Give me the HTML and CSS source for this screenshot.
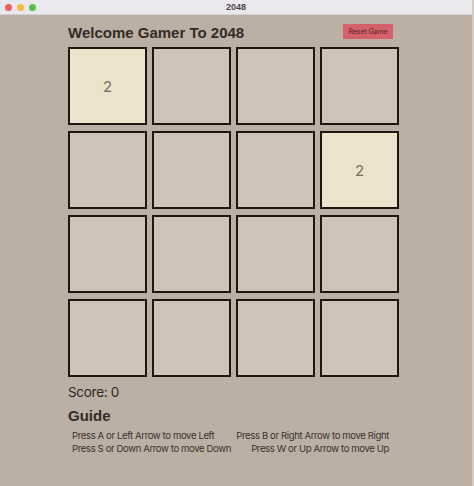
FILE: index.html
```html
<!DOCTYPE html>
<html lang="en">
<head>
  <meta charset="UTF-8">
  <title>2048</title>
  <meta name="viewport" content="width=device-width, initial-scale=1.0">
  <link rel="stylesheet" href="styles.css">
</head>
<body>
  <div class="window">
    <div class="titlebar">
      <div class="lights">
        <span class="light red"></span>
        <span class="light yellow"></span>
        <span class="light green"></span>
      </div>
      <div class="window-title">2048</div>
    </div>
    <div class="content">
      <div class="game">
        <div class="header">
          <h1 class="title">Welcome Gamer To 2048</h1>
          <button class="reset-btn">Reset Game</button>
        </div>
        <div class="board">
          <div class="tile tile-2">2</div>
          <div class="tile"></div>
          <div class="tile"></div>
          <div class="tile"></div>
          <div class="tile"></div>
          <div class="tile"></div>
          <div class="tile"></div>
          <div class="tile tile-2">2</div>
          <div class="tile"></div>
          <div class="tile"></div>
          <div class="tile"></div>
          <div class="tile"></div>
          <div class="tile"></div>
          <div class="tile"></div>
          <div class="tile"></div>
          <div class="tile"></div>
        </div>
        <div class="score">Score: 0</div>
        <h2 class="guide-title">Guide</h2>
        <div class="guide">
          <span>Press A or Left Arrow to move Left</span>
          <span class="right">Press B or Right Arrow to move Right</span>
          <span>Press S or Down Arrow to move Down</span>
          <span class="right">Press W or Up Arrow to move Up</span>
        </div>
      </div>
    </div>
  </div>
</body>
</html>
```

FILE: styles.css
```css
body {
  margin: 0;
  font-family: Inter, "Liberation Sans", sans-serif;
  background-color: #bcb0a4;
}
.window {
  display: flex;
  flex-direction: column;
  height: 486px;
  border-right: 2px solid #d2cbc4;
}
.titlebar {
  height: 14px;
  background-color: #ebe8ed;
  border-bottom: 1px solid #d6d1d2;
  display: flex;
  align-items: center;
  position: relative;
}
.lights {
  display: flex;
  gap: 5px;
  padding-left: 5px;
}
.light {
  width: 7px;
  height: 7px;
  border-radius: 50%;
}
.light.red { background-color: #ec5f5a; }
.light.yellow { background-color: #f4bd3f; }
.light.green { background-color: #5ac146; }
.window-title {
  position: absolute;
  left: 0;
  right: 0;
  text-align: center;
  font-family: "Liberation Sans", sans-serif;
  font-size: 9px;
  font-weight: 700;
  color: #4a4649;
}
.content {
  flex: 1;
  background-color: #bcb0a4;
}
.game {
  width: 332px;
  margin-left: 68px;
}
.header {
  display: flex;
  justify-content: space-between;
  align-items: flex-start;
  height: 32px;
}
.title {
  margin: 9px 0 0;
  font-family: "Liberation Sans", sans-serif;
  font-size: 15px;
  font-weight: 700;
  color: #342b26;
}
.reset-btn {
  margin: 9px 7px 0 0;
  width: 50px;
  height: 15px;
  padding: 0;
  border: none;
  background-color: #d5616a;
  color: #5a2226;
  font-family: Inter, sans-serif;
  font-size: 7px;
  letter-spacing: -0.1px;
}
.board {
  display: grid;
  grid-template-columns: repeat(4, 79px);
  grid-template-rows: repeat(4, 78px);
  column-gap: 5px;
  row-gap: 6px;
}
.tile {
  box-sizing: border-box;
  border: 2px solid #1f1611;
  background-color: #cfc3b6;
  display: flex;
  justify-content: center;
  align-items: center;
  font-size: 15px;
  color: #776e65;
}
.tile-2 {
  background-color: #ede2cb;
}
.score {
  margin-top: 7px;
  font-size: 13.5px;
  letter-spacing: -0.3px;
  color: #2e2723;
}
.guide-title {
  margin: 7px 0 0;
  font-family: "Liberation Sans", sans-serif;
  font-size: 15px;
  font-weight: 700;
  color: #342b26;
}
.guide {
  display: flex;
  flex-wrap: wrap;
  justify-content: space-between;
  margin: 5px 11px 0 4px;
  font-size: 9.6px;
  letter-spacing: -0.4px;
  line-height: 13px;
  color: #3a322d;
  white-space: nowrap;
}
.guide span {
  width: 50%;
}
.guide .right {
  text-align: right;
}
```
